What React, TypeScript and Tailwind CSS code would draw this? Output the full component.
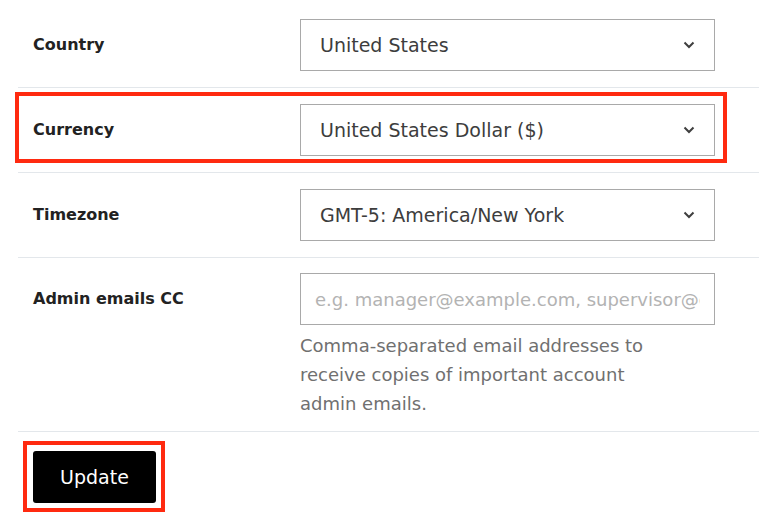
import React from "react";

const font = { fontFamily: '"DejaVu Sans", sans-serif' };

const Chevron = () => (
  <svg width="12" height="8" viewBox="0 0 12 8" className="shrink-0">
    <polyline points="1.5,1.5 6,6 10.5,1.5" fill="none" stroke="#3f3f3f" strokeWidth="2" />
  </svg>
);

const SelectBox = ({ value }: { value: string }) => (
  <div className="flex h-[52px] w-[415px] items-center justify-between border border-[#a9a9a9] bg-white pl-[19px] pr-[19px] text-[19px] text-[#3d3d3d]">
    <span className="truncate">{value}</span>
    <Chevron />
  </div>
);

const Row = ({
  label,
  children,
  className = "",
}: {
  label: string;
  children: React.ReactNode;
  className?: string;
}) => (
  <div className={`relative flex items-start border-b border-[#e3e7eb] pl-[15px] ${className}`}>
    <div className="flex h-[52px] w-[267px] shrink-0 items-center text-[16px] font-bold text-[#222]">
      {label}
    </div>
    <div>{children}</div>
  </div>
);

export default function App() {
  return (
    <div className="min-h-screen bg-white" style={font}>
      <div className="ml-[18px]">
        <Row label="Country" className="pt-[19px] pb-4">
          <SelectBox value="United States" />
        </Row>

        <Row label="Currency" className="py-4">
          <SelectBox value="United States Dollar ($)" />
          {/* highlight */}
          <div className="pointer-events-none absolute left-[-3px] top-[4px] h-[71px] w-[712px] border-[4px] border-[#ff2a10]" />
        </Row>

        <Row label="Timezone" className="py-4">
          <SelectBox value="GMT-5: America/New York" />
        </Row>

        <Row label="Admin emails CC" className="pt-[15px] pb-[13px]">
          <input
            type="text"
            placeholder="e.g. manager@example.com, supervisor@example.com"
            className="h-[52px] w-[415px] border border-[#a9a9a9] bg-white pl-[14px] pr-[14px] text-[18px] text-[#3d3d3d] outline-none placeholder:text-[#b3b3b3]"
            style={font}
          />
          <p className="mt-[6px] w-[372px] text-[18px] leading-[29px] text-[#707070]">
            Comma-separated email addresses to receive copies of important account admin emails.
          </p>
        </Row>

        <div className="pt-[19px] pl-[15px]">
          <div className="relative inline-block">
            <button
              className="flex h-[52px] w-[123px] items-center justify-center rounded-[3px] bg-black text-[19px] text-white"
              style={font}
            >
              Update
            </button>
            <div className="pointer-events-none absolute left-[-10px] top-[-10px] h-[71px] w-[142px] border-[4px] border-[#ff2a10]" />
          </div>
        </div>
      </div>
    </div>
  );
}
